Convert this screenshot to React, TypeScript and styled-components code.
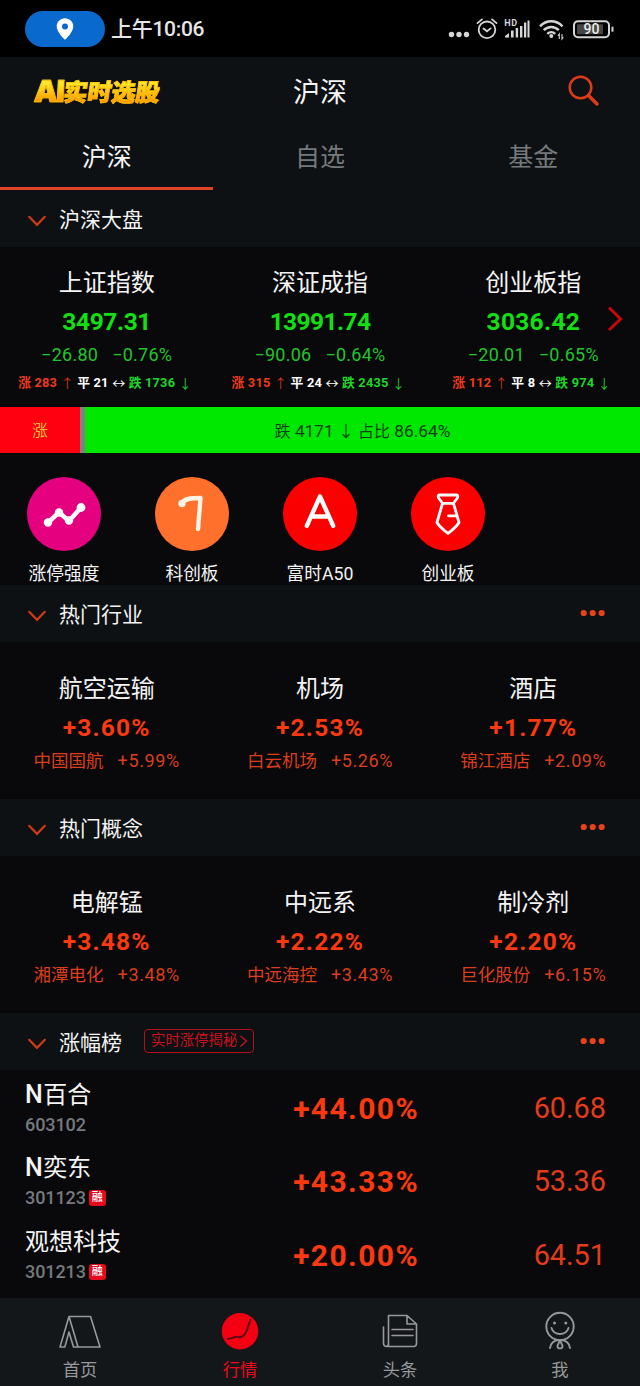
import React from "react";
import styled, { createGlobalStyle } from "styled-components";

const RED = "#fb3910";
const GREEN = "#12e012";

const Global = createGlobalStyle`
  * { box-sizing: border-box; }
  body { margin: 0; background: #09090b; }
`;

const Page = styled.div`
  width: 640px;
  height: 1386px;
  display: flex;
  flex-direction: column;
  overflow: hidden;
  background: #09090b;
  color: #f4f4f4;
  font-family: Roboto, "Noto Sans CJK SC", sans-serif;
  white-space: nowrap;
`;

const StatusBar = styled.div`
  height: 57px;
  flex: none;
  display: flex;
  align-items: center;
  padding: 0 26px 0 25px;
  background: #000;
`;
const LocationPill = styled.div`
  width: 80px;
  height: 36px;
  border-radius: 18px;
  background: #0a69cc;
  display: flex;
  align-items: center;
  justify-content: center;
`;
const Clock = styled.div`
  margin-left: 6px;
  flex: 1;
  font: 500 21px/57px Roboto, "Noto Sans CJK SC", sans-serif;
  letter-spacing: -0.3px;
  padding-top: 2px;
  color: #e6e6e6;
`;

const Header = styled.div`
  height: 67px;
  flex: none;
  display: grid;
  grid-template-columns: 1fr 1fr 1fr;
  align-items: center;
  background: #0d1113;
  padding: 0 40px 0 34px;
`;
const goldText = `
  -webkit-text-stroke: 0.7px #ffc000;
  background: linear-gradient(180deg, #ffe62c 25%, #ffa200 80%);
  background-clip: text;
  -webkit-background-clip: text;
  color: transparent;
`;
const Logo = styled.div`
  display: flex;
  align-items: center;
  height: 30px;
`;
const LogoLatin = styled.span`
  ${goldText}
  font: 900 30px/30px Inter, sans-serif;
  letter-spacing: -1.5px;
  transform: skewX(-3deg);
`;
const LogoHan = styled.span`
  ${goldText}
  font: 900 24px/30px "Noto Sans CJK SC", sans-serif;
  transform: skewX(-8deg);
`;
const Title = styled.div`
  text-align: center;
  font-size: 27px;
  line-height: 60px;
  padding: 4px 0 0 6px;
`;
const HeaderAction = styled.div`
  display: flex;
  justify-content: flex-end;
`;

const Tabs = styled.div`
  height: 66px;
  flex: none;
  display: grid;
  grid-template-columns: repeat(3, 1fr);
  background: #0d1113;
`;
const Tab = styled.div<{ $active?: boolean }>`
  text-align: center;
  font-size: 25px;
  line-height: 63px;
  padding-top: 2px;
  height: 66px;
  color: ${(p) => (p.$active ? "#f6f6f6" : "#76797b")};
  border-bottom: 3px solid ${(p) => (p.$active ? "#e0432a" : "transparent")};
`;

const SectionBar = styled.div`
  height: 57px;
  flex: none;
  display: flex;
  align-items: center;
  padding: 4px 35px 0 28px;
  background: #0d1113;
`;
const SectionTitle = styled.div`
  margin-left: 13px;
  font-size: 21px;
  line-height: 53px;
`;
const Spacer = styled.div`
  flex: 1;
`;
const Promo = styled.div`
  margin-left: 22px;
  width: 110px;
  height: 24px;
  margin-top: -5px;
  border: 1px solid #b40f1c;
  border-radius: 4px;
  display: flex;
  align-items: center;
  padding-left: 6px;
  gap: 2px;
  color: #c8121f;
  font-size: 14.4px;
  line-height: 22px;
`;

const Trio = styled.div<{ $h: number; $top: number }>`
  position: relative;
  height: ${(p) => p.$h}px;
  flex: none;
  padding-top: ${(p) => p.$top}px;
  display: grid;
  grid-template-columns: repeat(3, 1fr);
`;
const Cell = styled.div`
  display: flex;
  flex-direction: column;
  align-items: center;
`;
const CellName = styled.div`
  font-size: 24px;
  line-height: 42px;
  height: 40px;
`;
const CellValue = styled.div<{ $c: string; $track: number }>`
  font-size: 24.5px;
  font-weight: 700;
  letter-spacing: ${(p) => p.$track}px;
  line-height: 40px;
  height: 40px;
  color: ${(p) => p.$c};
`;
const CellSub = styled.div<{ $c: string; $track: number }>`
  display: flex;
  gap: 14px;
  font-size: 18px;
  letter-spacing: ${(p) => p.$track}px;
  line-height: 26px;
  height: 26px;
  color: ${(p) => p.$c};
`;
const StockName = styled.span`
  font-size: 17.5px;
  letter-spacing: 0;
`;
const Counts = styled.div`
  display: flex;
  align-items: center;
  font-size: 12.8px;
  font-weight: 700;
  line-height: 30px;
  height: 30px;
  letter-spacing: 0.2px;
`;
const Count = styled.span<{ $c: string }>`
  color: ${(p) => p.$c};
  white-space: pre;
`;
const Arrow = styled.span<{ $c: string; $w: number }>`
  color: ${(p) => p.$c};
  width: ${(p) => p.$w}px;
  display: flex;
  justify-content: center;
  font: 400 13px/30px "Noto Sans CJK SC", sans-serif;
  letter-spacing: 0;
`;
const NextMark = styled.div`
  position: absolute;
  right: 16px;
  top: 58px;
  line-height: 0;
`;

const Ratio = styled.div`
  height: 46px;
  flex: none;
  display: flex;
  font-size: 17.3px;
  line-height: 48px;
  text-align: center;
`;
const RatioUp = styled.div`
  width: 80px;
  background: #ff0010;
  color: #e5c23a;
  font-size: 15.5px;
`;
const RatioFlat = styled.div`
  width: 5px;
  background: #808080;
`;
const RatioDown = styled.div`
  flex: 1;
  display: flex;
  justify-content: center;
  background: #00e800;
  color: #0c4110;
`;
const Cjk = styled.span`
  font-size: 16px;
`;

const Shortcuts = styled.div`
  height: 132px;
  flex: none;
  display: flex;
  padding-top: 24px;
`;
const Shortcut = styled.div`
  width: 128px;
  display: flex;
  flex-direction: column;
  align-items: center;
  font-size: 17.7px;
  line-height: 47px;
`;
const Disc = styled.div<{ $c: string }>`
  width: 74px;
  height: 74px;
  border-radius: 50%;
  background: ${(p) => p.$c};
  line-height: 0;
`;

const Ranks = styled.div`
  height: 228px;
  flex: none;
  padding-top: 1px;
`;
const RankRow = styled.div`
  height: 73.3px;
  display: grid;
  grid-template-columns: 224px 168px 1fr;
  padding: 0 34px 0 25px;
`;
const RankName = styled.div`
  font-size: 24px;
  line-height: 34px;
  height: 40px;
  padding-top: 7px;
`;
const Prefix = styled.span`
  font-size: 25px;
  font-weight: 500;
  margin-right: 0.5px;
`;
const RankCode = styled.div`
  display: flex;
  align-items: center;
  gap: 3px;
  font-size: 18px;
  font-weight: 500;
  letter-spacing: -0.1px;
  line-height: 28px;
  color: #77797c;
`;
const Badge = styled.span`
  width: 17px;
  height: 16px;
  border-radius: 3px;
  background: #e60a1e;
  color: #fff;
  font-size: 11px;
  line-height: 16px;
  text-align: center;
`;
const RankPct = styled.div`
  text-align: right;
  font-size: 30px;
  font-weight: 700;
  letter-spacing: 1.4px;
  margin-right: -2px;
  line-height: 75px;
  color: ${RED};
`;
const RankPrice = styled.div`
  text-align: right;
  font-size: 28.8px;
  line-height: 75px;
  color: #e33c1b;
`;

const Nav = styled.div`
  height: 88px;
  flex: none;
  display: grid;
  grid-template-columns: repeat(4, 1fr);
  background: #14171a;
`;
const NavItem = styled.div<{ $active?: boolean }>`
  display: flex;
  flex-direction: column;
  align-items: center;
  padding-top: 11px;
  font-size: 17.3px;
  line-height: 34px;
  color: ${(p) => (p.$active ? "#ee0a1c" : "#97999b")};
`;

const Chevron = () => (
  <svg width="18" height="12" viewBox="0 0 18 12" fill="none">
    <path d="M1.2 1.8 9 9.8l7.8-8" stroke="#cf3a16" strokeWidth="2.2" strokeLinecap="round" />
  </svg>
);
const DotsIcon = styled.svg`
  margin-top: -6px;
`;
const Dots = () => (
  <DotsIcon width="25" height="8" viewBox="0 0 25 8" fill="#e8421a">
    <circle cx="3.7" cy="4" r="3.1" />
    <circle cx="12.7" cy="4" r="3.1" />
    <circle cx="21.7" cy="4" r="3.1" />
  </DotsIcon>
);

const StatusIcons = () => (
  <svg width="166" height="24" viewBox="448 16 166 24" fill="none" stroke="#d6d6d6">
    <g fill="#d6d6d6" stroke="none">
      <circle cx="451.5" cy="33.5" r="2.7" />
      <circle cx="459" cy="33.5" r="2.7" />
      <circle cx="466.5" cy="33.5" r="2.7" />
    </g>
    <circle cx="487" cy="28.8" r="8.3" strokeWidth="1.8" />
    <path d="M483.5 27.5l3.5 2.8 3.6-2.9M477.500 22.100l4.500-3.700M496.500 22.100l-4.500-3.700" strokeWidth="1.8" strokeLinecap="round" />
    <text x="504.3" y="24.8" fontSize="9" fontWeight="700" letterSpacing=".5" fontFamily="Roboto" fill="#d6d6d6" stroke="none">HD</text>
    <path d="M505 36.500v-1.500l4-3v4.500zM511 36.500v-7h2.600v7zM515.700 36.500V27h2.400v9.500zM520 36.500V25h2.400v11.500zM524 36.500V21.500h2.300v15zM527.500 36.500V19.500h2v17z" fill="#d6d6d6" stroke="none" />
    <path d="M540 25.300c6.500-6.700 16-6.700 22.500 0M543.700 29.200c4.400-4.300 10.700-4.300 15.100 0M547.300 32.800c2.300-2.200 5.600-2.200 7.900 0" strokeWidth="2.4" />
    <circle cx="551.3" cy="35" r="2" fill="#d6d6d6" stroke="none" />
    <path d="M559.300 38v-5l-1.300 1.800M562 33v5l1.300-1.800" strokeWidth="1.100" />
    <rect x="574" y="20.2" width="35" height="16" rx="4" strokeWidth="2" />
    <rect x="577" y="23.200" width="26" height="10" rx="1" fill="#454545" stroke="none" />
    <path d="M612.5 25.700v5" strokeWidth="2" />
    <text x="591.5" y="33.200" fontSize="14" fontWeight="500" textAnchor="middle" fontFamily="Roboto" fill="#ececec" stroke="none">90</text>
  </svg>
);

const indexes = [
  { name: "上证指数", value: "3497.31", track: -0.4, diff: "−26.80", pct: "−0.76%", up: "283", flat: "21", down: "1736" },
  { name: "深证成指", value: "13991.74", track: -0.6, diff: "−90.06", pct: "−0.64%", up: "315", flat: "24", down: "2435" },
  { name: "创业板指", value: "3036.42", track: 0.3, diff: "−20.01", pct: "−0.65%", up: "112", flat: "8", down: "974" },
];
const industries = [
  ["航空运输", "+3.60%", "中国国航", "+5.99%"],
  ["机场", "+2.53%", "白云机场", "+5.26%"],
  ["酒店", "+1.77%", "锦江酒店", "+2.09%"],
];
const concepts = [
  ["电解锰", "+3.48%", "湘潭电化", "+3.48%"],
  ["中远系", "+2.22%", "中远海控", "+3.43%"],
  ["制冷剂", "+2.20%", "巨化股份", "+6.15%"],
];
const ranks = [
  { prefix: "N", name: "百合", code: "603102", margin: false, pct: "+44.00%", price: "60.68" },
  { prefix: "N", name: "奕东", code: "301123", margin: true, pct: "+43.33%", price: "53.36" },
  { prefix: "", name: "观想科技", code: "301213", margin: true, pct: "+20.00%", price: "64.51" },
];

const discProps = { width: 74, height: 74, viewBox: "0 0 74 74", fill: "none", stroke: "#fff", strokeLinecap: "round" as const, strokeLinejoin: "round" as const };

const shortcuts = [
  {
    label: "涨停强度",
    color: "#e4007f",
    icon: (
      <svg {...discProps} strokeWidth="4.4">
        <path d="M21 45.500 32 35.500 42 44 54 30.500" />
        <g fill="#fff" stroke="none">
          <circle cx="21" cy="45.5" r="4.2" />
          <circle cx="32" cy="35.5" r="4.2" />
          <circle cx="42" cy="43.5" r="4.2" />
          <circle cx="54" cy="30.5" r="4.4" />
        </g>
      </svg>
    ),
  },
  {
    label: "科创板",
    color: "#ff702d",
    icon: (
      <svg {...discProps} strokeWidth="4.4">
        <path d="M27 26c2-4 8-5 18.500-5L43 52" stroke="#fff3e6" />
        <circle cx="27" cy="26.5" r="3.700" fill="#fff3e6" stroke="none" />
      </svg>
    ),
  },
  {
    label: "富时A50",
    color: "#fa0000",
    icon: (
      <svg {...discProps} strokeWidth="4.4">
        <path d="M23.800 48.800 37 19.500l13.200 29.300M28 39.500h18" />
      </svg>
    ),
  },
  {
    label: "创业板",
    color: "#fa0000",
    icon: (
      <svg {...discProps} strokeWidth="2.8">
        <path d="M28.500 18h17c1.500 0 1.500 1.500 1 2.800L42.500 26.300h-11L27.500 20.800c-.5-1.300-.5-2.800 1-2.800zM31.500 26.300 26 45.500c2 4 7 7.500 11 11 4-3.500 9-7 11-11l-5.500-19.200M37.500 38.800h8" />
      </svg>
    ),
  },
];

const navProps = { width: 46, height: 44, viewBox: "0 0 46 44", fill: "none", stroke: "#96989a", strokeWidth: 1.6, strokeLinejoin: "round" as const, strokeLinecap: "round" as const };

const navItems = [
  {
    label: "首页",
    icon: (
      <svg {...navProps}>
        <path d="M12 7.500h21.500l9.500 30.500H21L12 7.500 3 38h4.800l4.200-15 4.500 15H21" />
      </svg>
    ),
  },
  {
    label: "行情",
    active: true,
    icon: (
      <svg {...navProps}>
        <circle cx="23" cy="22.2" r="18.200" fill="#f50012" stroke="none" />
        <path d="M11 30c4-.5 7-3 10.500-2 5 1 7.500-4 9-8.500l3-9" stroke="#5d0a12" strokeWidth="2" />
      </svg>
    ),
  },
  {
    label: "头条",
    icon: (
      <svg {...navProps}>
        <path d="M11.500 37.500V6.500h18.500l9.500 8.500v19.500q0 3-3 3H10q-3.500 0-3.500-3.500V18M11.500 34q0 3.500-2 3.500M30 6.500V15h9.500M15 20.500h21M15 26.500h21" />
      </svg>
    ),
  },
  {
    label: "我",
    icon: (
      <svg {...navProps} strokeWidth="1.900">
        <circle cx="23" cy="17.500" r="13.700" />
        <path d="M14.500 19c2.500 8 14.500 8 17 0M22 31c-5 0-8.500 3.500-9 8M24 31c5 0 8.500 3.500 9 8M23 31.500c-1 2.500-2.500 4-2.500 6 0 2.500 5 2.500 5 0 0-2-1.500-3.500-2.500-6" />
        <circle cx="17.500" cy="14" r="1.500" fill="#96989a" stroke="none" />
        <circle cx="28.800" cy="14" r="1.500" fill="#96989a" stroke="none" />
      </svg>
    ),
  },
];

const StockTrio = ({ data }: { data: string[][] }) => (
  <Trio $h={157} $top={26}>
    {data.map(([name, pct, stock, change]) => (
      <Cell key={name}>
        <CellName>{name}</CellName>
        <CellValue $c={RED} $track={1.2}>{pct}</CellValue>
        <CellSub $c="#dc3d1c" $track={0.6}>
          <StockName>{stock}</StockName>
          <span>{change}</span>
        </CellSub>
      </Cell>
    ))}
  </Trio>
);

export default function App() {
  return (
    <Page>
      <Global />
      <StatusBar>
        <LocationPill>
          <svg width="18" height="22" viewBox="0 0 18 22">
            <path fillRule="evenodd" fill="#fff" d="M9 .3C4.300.3.700 3.900.700 8.500.700 14.500 9 21.800 9 21.800s8.300-7.300 8.300-13.300C17.300 3.900 13.700.3 9 .3zm0 5.200a3 3 0 1 1 0 6 3 3 0 0 1 0-6z" />
          </svg>
        </LocationPill>
        <Clock>上午10:06</Clock>
        <StatusIcons />
      </StatusBar>

      <Header>
        <Logo>
          <LogoLatin>AI</LogoLatin>
          <LogoHan>实时选股</LogoHan>
        </Logo>
        <Title>沪深</Title>
        <HeaderAction>
          <svg width="32" height="32" viewBox="0 0 32 32" fill="none" stroke="#dd3a1c" strokeLinecap="round">
            <circle cx="12.500" cy="12.500" r="10.800" strokeWidth="2.500" />
            <path d="M20.500 20.500 29 29" strokeWidth="3.500" />
          </svg>
        </HeaderAction>
      </Header>
      <Tabs>
        <Tab $active>沪深</Tab>
        <Tab>自选</Tab>
        <Tab>基金</Tab>
      </Tabs>

      <SectionBar>
        <Chevron />
        <SectionTitle>沪深大盘</SectionTitle>
      </SectionBar>
      <Trio $h={160} $top={15}>
        {indexes.map((i) => (
          <Cell key={i.name}>
            <CellName>{i.name}</CellName>
            <CellValue $c={GREEN} $track={i.track}>{i.value}</CellValue>
            <CellSub $c="#20c52c" $track={0.25}>
              <span>{i.diff}</span>
              <span>{i.pct}</span>
            </CellSub>
            <Counts>
              <Count $c="#ec3b18">涨 {i.up}</Count>
              <Arrow $c="#c93618" $w={20}>↑</Arrow>
              <Count $c="#fff">平 {i.flat}</Count>
              <Arrow $c="#fff" $w={20}>↔</Arrow>
              <Count $c="#1fd52b">跌 {i.down}</Count>
              <Arrow $c="#20c52c" $w={20}>↓</Arrow>
            </Counts>
          </Cell>
        ))}
        <NextMark>
          <svg width="18" height="28" viewBox="0 0 18 28" fill="none">
            <path d="M3 2.500 14.500 14 3 25" stroke="#c80808" strokeWidth="3" />
          </svg>
        </NextMark>
      </Trio>

      <Ratio>
        <RatioUp>涨</RatioUp>
        <RatioFlat />
        <RatioDown>
          <span>
            <Cjk>跌</Cjk> 4171 <Cjk>↓ 占比</Cjk> 86.64%
          </span>
        </RatioDown>
      </Ratio>

      <Shortcuts>
        {shortcuts.map((s) => (
          <Shortcut key={s.label}>
            <Disc $c={s.color}>{s.icon}</Disc>
            {s.label}
          </Shortcut>
        ))}
      </Shortcuts>

      <SectionBar>
        <Chevron />
        <SectionTitle>热门行业</SectionTitle>
        <Spacer />
        <Dots />
      </SectionBar>
      <StockTrio data={industries} />

      <SectionBar>
        <Chevron />
        <SectionTitle>热门概念</SectionTitle>
        <Spacer />
        <Dots />
      </SectionBar>
      <StockTrio data={concepts} />

      <SectionBar>
        <Chevron />
        <SectionTitle>涨幅榜</SectionTitle>
        <Promo>
          实时涨停揭秘
          <svg width="9" height="14" viewBox="0 0 9 14" fill="none">
            <path d="M1.500 2 7.500 7l-6 5.500" stroke="#c8121f" strokeWidth="1.400" />
          </svg>
        </Promo>
        <Spacer />
        <Dots />
      </SectionBar>
      <Ranks>
        {ranks.map((r) => (
          <RankRow key={r.code}>
            <div>
              <RankName>
                {r.prefix && <Prefix>{r.prefix}</Prefix>}
                {r.name}
              </RankName>
              <RankCode>
                {r.code}
                {r.margin && <Badge>融</Badge>}
              </RankCode>
            </div>
            <RankPct>{r.pct}</RankPct>
            <RankPrice>{r.price}</RankPrice>
          </RankRow>
        ))}
      </Ranks>

      <Nav>
        {navItems.map((n) => (
          <NavItem key={n.label} $active={n.active}>
            {n.icon}
            {n.label}
          </NavItem>
        ))}
      </Nav>
    </Page>
  );
}
